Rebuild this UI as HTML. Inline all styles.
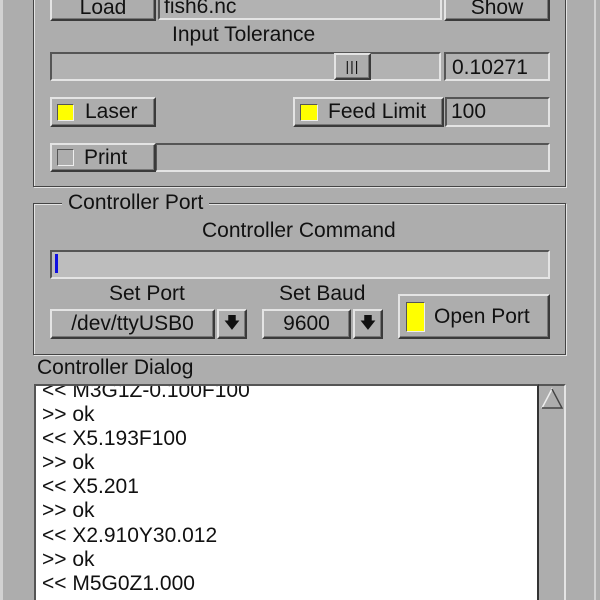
<!DOCTYPE html><html style="overflow:hidden"><head><style>
html,body{overflow:hidden}
body{margin:0;width:600px;height:600px;overflow:hidden;background:#adadad;position:relative;font-family:"Liberation Sans",sans-serif;font-size:21px;color:#111}
div{position:absolute;box-sizing:border-box}
.r{border:2px solid;border-color:#e4e4e4 #3a3a3a #3a3a3a #e4e4e4;background:#adadad;text-align:center;box-shadow:inset -1px -1px 0 #777}
.s{border:2px solid;border-color:#555 #e4e4e4 #e4e4e4 #555;background:#b2b2b2}
.t{white-space:nowrap}
.y{background:#ffff00;border:1px solid;border-color:#555 #eee #eee #555}
.g{border:1px solid #444;box-shadow:1px 1px 0 #e4e4e4, inset 1px 1px 0 #e4e4e4}
.l{line-height:24px;left:6px;white-space:nowrap}
</style></head><body>
<div style="left:0;top:0;width:3px;height:600px;background:#d2d2d2"></div>
<div style="left:594px;top:0;width:2px;height:600px;background:#d2d2d2"></div>
<div class="g" style="left:33px;top:-10px;width:533px;height:197px"></div>
<div class="g" style="left:33px;top:203px;width:533px;height:152px"></div>
<div class="t" style="left:62px;top:191px;padding:0 6px;background:#adadad;line-height:24px">Controller Port</div>

<div class="r" style="left:50px;top:-8px;width:106px;height:29px;line-height:28px">Load</div>
<div class="s t" style="left:158px;top:-8px;width:284px;height:28px;line-height:26px;padding-left:4px">fish6.nc</div>
<div class="r" style="left:444px;top:-8px;width:106px;height:29px;line-height:28px">Show</div>
<div class="t" style="left:172px;top:23px;line-height:24px">Input Tolerance</div>
<div class="s" style="left:50px;top:52px;width:391px;height:29px"></div>
<div class="r" style="left:334px;top:53px;width:37px;height:27px;font-size:14px;line-height:22px;letter-spacing:1px">|||</div>
<div class="s t" style="left:444px;top:52px;width:106px;height:29px;line-height:27px;padding-left:6px">0.10271</div>

<div class="r t" style="left:50px;top:97px;width:106px;height:30px;line-height:26px;padding-left:33px;text-align:left">Laser</div>
<div class="y" style="left:57px;top:104px;width:17px;height:17px"></div>
<div class="r t" style="left:293px;top:97px;width:151px;height:30px;line-height:26px;padding-left:33px;text-align:left">Feed Limit</div>
<div class="y" style="left:300px;top:104px;width:18px;height:17px"></div>
<div class="s t" style="left:445px;top:97px;width:105px;height:30px;line-height:26px;padding-left:4px;background:#adadad">100</div>

<div class="s" style="left:155px;top:143px;width:395px;height:29px;background:#adadad"></div>
<div class="r t" style="left:50px;top:143px;width:106px;height:29px;line-height:25px;padding-left:32px;text-align:left">Print</div>
<div style="left:57px;top:149px;width:17px;height:17px;border:1px solid;border-color:#555 #eee #eee #555"></div>

<div class="t" style="left:202px;top:219px;line-height:24px">Controller Command</div>
<div class="s" style="left:50px;top:250px;width:500px;height:29px;background:#bdbdbd"></div>
<div style="left:55px;top:254px;width:3px;height:19px;background:#1010e0"></div>
<div class="t" style="left:109px;top:282px;line-height:24px">Set Port</div>
<div class="t" style="left:279px;top:282px;line-height:24px">Set Baud</div>
<div class="r t" style="left:50px;top:309px;width:165px;height:30px;line-height:26px">/dev/ttyUSB0</div>
<div class="r" style="left:217px;top:309px;width:30px;height:30px;font-size:16px;line-height:26px">&#129095;</div>
<div class="r" style="left:262px;top:309px;width:89px;height:30px;line-height:26px">9600</div>
<div class="r" style="left:353px;top:309px;width:30px;height:30px;font-size:16px;line-height:26px">&#129095;</div>
<div class="r t" style="left:398px;top:294px;width:152px;height:45px;line-height:41px;padding-left:34px;text-align:left">Open Port</div>
<div class="y" style="left:406px;top:302px;width:19px;height:30px"></div>

<div class="t" style="left:37px;top:356px;line-height:24px">Controller Dialog</div>
<div style="left:34px;top:384px;width:505px;height:216px;background:#fff;border-left:2px solid #555;border-top:2px solid #555;border-right:2px solid #333;overflow:hidden">
<div class="l" style="top:-7px">&lt;&lt; M3G1Z-0.100F100</div>
<div class="l" style="top:17px">&gt;&gt; ok</div>
<div class="l" style="top:41px">&lt;&lt; X5.193F100</div>
<div class="l" style="top:65px">&gt;&gt; ok</div>
<div class="l" style="top:89px">&lt;&lt; X5.201</div>
<div class="l" style="top:113px">&gt;&gt; ok</div>
<div class="l" style="top:138px">&lt;&lt; X2.910Y30.012</div>
<div class="l" style="top:162px">&gt;&gt; ok</div>
<div class="l" style="top:186px">&lt;&lt; M5G0Z1.000</div>
</div>
<div style="left:539px;top:384px;width:27px;height:216px;background:#adadad;border-top:2px solid #555;border-right:2px solid #e4e4e4"></div>
<svg style="position:absolute;left:540px;top:386px" width="24" height="24"><path d="M2 22 L12 3 L22 22" fill="none" stroke="#eee" stroke-width="1.5"/><path d="M12 3 L22 22 L2 22" fill="none" stroke="#444" stroke-width="1.5"/></svg>
</body></html>
